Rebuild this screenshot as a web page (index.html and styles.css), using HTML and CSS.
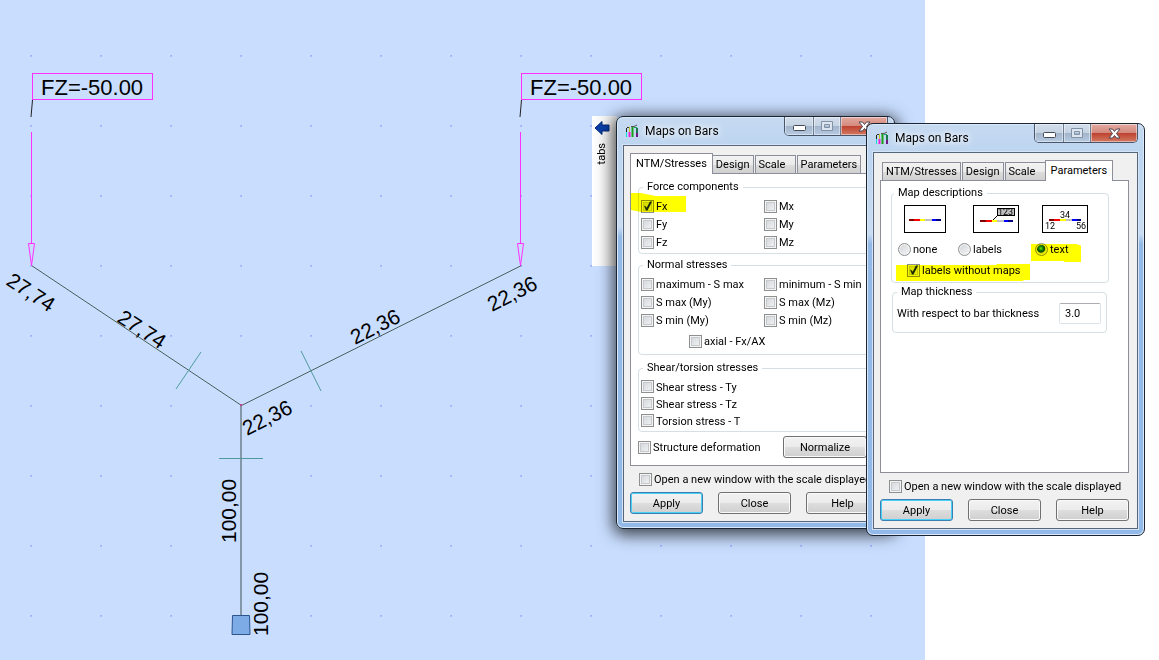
FILE: index.html
```
<!DOCTYPE html>
<html lang="en">
<head>
    <meta charset="UTF-8">
    <meta name="viewport" content="width=device-width, initial-scale=1.0">
    <title>Maps on Bars</title>
    <link rel="stylesheet" href="styles.css">
</head>
<body>
    <main class="workspace">
        <svg class="model" width="925" height="660">
            <defs>
                <pattern id="grid" x="30" y="55" width="70" height="70" patternUnits="userSpaceOnUse">
                    <rect x="0" y="0" width="2" height="2" fill="#b2bdff"/>
                    <rect x="1" y="0" width="1" height="1" fill="#9aa3fa"/>
                </pattern>
            </defs>
            <rect width="925" height="660" fill="url(#grid)"/>

            <!-- bars -->
            <g stroke="#4a605e" fill="none">
                <path d="M31.5 265.5L241.5 405.5L521.5 265.5"/>
                <path d="M241 405.5V615" stroke="#8397a8" stroke-width="2"/>
            </g>
            <g stroke="#4f999c" fill="none">
                <path d="M176 389L201 352M301 351L321 391"/>
                <path d="M219 458.5H263"/>
            </g>

            <!-- support -->
            <path d="M232.5 615.5H249.5L250 634.5H232Z" fill="#7cabe6" stroke="#2c5590"/>
            <circle cx="241" cy="405" r="1" fill="#d0208a"/>

            <!-- loads -->
            <g stroke="#ff30ff" fill="none">
                <rect x="32.5" y="73.5" width="120" height="26"/>
                <rect x="521.5" y="73.5" width="120" height="26"/>
                <path d="M31.5 132V243M28.5 243.5H34.5L31.5 265.5Z"/>
                <path d="M520.5 132V243M517.5 243.5H523.5L520.5 265.5Z"/>
            </g>
            <path d="M32.5 100L31 117M521.5 100L520 117" stroke="#222"/>

            <g class="values">
                <text class="load" x="41" y="95">FZ=-50.00</text>
                <text class="load" x="530" y="95">FZ=-50.00</text>
                <text transform="translate(5 284) rotate(33)">27,74</text>
                <text transform="translate(116 321) rotate(33)">27,74</text>
                <text transform="translate(355 345) rotate(-27)">22,36</text>
                <text transform="translate(247 436) rotate(-27)">22,36</text>
                <text transform="translate(492 312) rotate(-27)">22,36</text>
                <text transform="translate(236 543) rotate(-90)">100,00</text>
                <text transform="translate(268 636) rotate(-90)">100,00</text>
            </g>
        </svg>

        <button class="side-tabs">
            <svg width="16" height="14" viewBox="0 0 16 14">
                <path d="M1 7L8 0.5V4H15V10H8V13.5Z" fill="#0b3fa8" stroke="#062a78"/>
            </svg>
            <span>tabs</span>
        </button>

        <section class="window window-stress">
            <header class="titlebar">
                <svg class="logo" width="14" height="14" viewBox="0 0 14 14" fill="none">
                    <path d="M1.5 4V8" stroke="#222"/>
                    <path d="M1.5 8V13" stroke="#12e0d8"/>
                    <path d="M2 3.5H4" stroke="#333"/>
                    <path d="M4.5 3V8" stroke="#c8c020"/>
                    <path d="M4.5 8V13" stroke="#f01ee0" stroke-width="2"/>
                    <path d="M7.5 3V13" stroke="#16a016" stroke-width="2"/>
                    <path d="M6 2.5H9L12 1" stroke="#555"/>
                    <path d="M9 3.5H12" stroke="#18a060"/>
                    <path d="M12 4V9" stroke="#187848" stroke-width="2"/>
                    <path d="M12 9V13" stroke="#701880" stroke-width="2"/>
                </svg>
                <h1>Maps on Bars</h1>
                <div class="controls">
                    <button class="min" aria-label="Minimize"><svg width="13" height="6"><rect x="0.5" y="0.5" width="12" height="5" rx="1" fill="#fff" stroke="#444b57"/></svg></button>
                    <button class="max" aria-label="Maximize"><svg width="12" height="10"><path d="M0.5 0.5H11.5V9.5H0.5ZM3.5 3.5H8.5V6.5H3.5Z" fill="#dde6f0" fill-rule="evenodd" stroke="#8292a6"/></svg></button>
                    <button class="close" aria-label="Close"><svg width="13" height="11" viewBox="0 0 13 11"><path d="M1 1H4.5L6.5 3.5L8.5 1H12L8.5 5.5L12 10H8.5L6.5 7.5L4.5 10H1L4.5 5.5Z" fill="#fff" stroke="#4d4550"/></svg></button>
                </div>
            </header>
            <form class="client">
                <div class="tabs">
                    <button type="button" class="tab active">NTM/Stresses</button>
                    <button type="button" class="tab">Design</button>
                    <button type="button" class="tab">Scale</button>
                    <button type="button" class="tab">Parameters</button>
                </div>
                <div class="panel">
                    <fieldset class="group force">
                        <legend>Force components</legend>
                        <div class="pairs">
                            <label class="option mark-fx"><input type="checkbox" checked>Fx</label>
                            <label class="option"><input type="checkbox">Mx</label>
                            <label class="option"><input type="checkbox">Fy</label>
                            <label class="option"><input type="checkbox">My</label>
                            <label class="option"><input type="checkbox">Fz</label>
                            <label class="option"><input type="checkbox">Mz</label>
                        </div>
                    </fieldset>
                    <fieldset class="group normal">
                        <legend>Normal stresses</legend>
                        <div class="pairs">
                            <label class="option"><input type="checkbox">maximum - S max</label>
                            <label class="option"><input type="checkbox">minimum - S min</label>
                            <label class="option"><input type="checkbox">S max (My)</label>
                            <label class="option"><input type="checkbox">S max (Mz)</label>
                            <label class="option"><input type="checkbox">S min (My)</label>
                            <label class="option"><input type="checkbox">S min (Mz)</label>
                        </div>
                        <label class="option axial"><input type="checkbox">axial - Fx/AX</label>
                    </fieldset>
                    <fieldset class="group shear">
                        <legend>Shear/torsion stresses</legend>
                        <label class="option"><input type="checkbox">Shear stress - Ty</label>
                        <label class="option"><input type="checkbox">Shear stress - Tz</label>
                        <label class="option"><input type="checkbox">Torsion stress - T</label>
                    </fieldset>
                    <div class="deformation">
                        <label class="option"><input type="checkbox">Structure deformation</label>
                        <button type="button" class="button wide">Normalize</button>
                    </div>
                </div>
                <label class="option new-window"><input type="checkbox">Open a new window with the scale displayed</label>
                <div class="actions">
                    <button type="button" class="button default">Apply</button>
                    <button type="button" class="button">Close</button>
                    <button type="button" class="button">Help</button>
                </div>
            </form>
        </section>
    </main>

    <section class="window window-params">
        <header class="titlebar">
            <svg class="logo" width="14" height="14" viewBox="0 0 14 14" fill="none">
                <path d="M1.5 4V8" stroke="#222"/>
                <path d="M1.5 8V13" stroke="#12e0d8"/>
                <path d="M2 3.5H4" stroke="#333"/>
                <path d="M4.5 3V8" stroke="#c8c020"/>
                <path d="M4.5 8V13" stroke="#f01ee0" stroke-width="2"/>
                <path d="M7.5 3V13" stroke="#16a016" stroke-width="2"/>
                <path d="M6 2.5H9L12 1" stroke="#555"/>
                <path d="M9 3.5H12" stroke="#18a060"/>
                <path d="M12 4V9" stroke="#187848" stroke-width="2"/>
                <path d="M12 9V13" stroke="#701880" stroke-width="2"/>
            </svg>
            <h1>Maps on Bars</h1>
            <div class="controls">
                <button class="min" aria-label="Minimize"><svg width="13" height="6"><rect x="0.5" y="0.5" width="12" height="5" rx="1" fill="#fff" stroke="#444b57"/></svg></button>
                <button class="max" aria-label="Maximize"><svg width="12" height="10"><path d="M0.5 0.5H11.5V9.5H0.5ZM3.5 3.5H8.5V6.5H3.5Z" fill="#dde6f0" fill-rule="evenodd" stroke="#8292a6"/></svg></button>
                <button class="close" aria-label="Close"><svg width="13" height="11" viewBox="0 0 13 11"><path d="M1 1H4.5L6.5 3.5L8.5 1H12L8.5 5.5L12 10H8.5L6.5 7.5L4.5 10H1L4.5 5.5Z" fill="#fff" stroke="#4d4550"/></svg></button>
            </div>
        </header>
        <form class="client">
            <div class="tabs">
                <button type="button" class="tab">NTM/Stresses</button>
                <button type="button" class="tab">Design</button>
                <button type="button" class="tab">Scale</button>
                <button type="button" class="tab active">Parameters</button>
            </div>
            <div class="panel params">
                <fieldset class="group descriptions">
                    <legend>Map descriptions</legend>
                    <div class="samples">
                        <svg width="42" height="28">
                            <rect x="0.5" y="0.5" width="41" height="27" fill="#fff" stroke="#000"/>
                            <g transform="translate(5 14)">
                                <path d="M0 0h5v2h-5z" fill="#800000"/>
                                <path d="M5 0h6v2h-6z" fill="#f00"/>
                                <path d="M11 0h5v2h-5z" fill="#ff0"/>
                                <path d="M16 0h7v2h-7z" fill="#c0c0c0"/>
                                <path d="M23 0h4v2h-4z" fill="#00f"/>
                                <path d="M27 0h5v2h-5z" fill="#000080"/>
                            </g>
                        </svg>
                        <svg width="46" height="28">
                            <rect x="0.5" y="0.5" width="45" height="27" fill="#fff" stroke="#000"/>
                            <g transform="translate(7 15)">
                                <path d="M0 0h6v2h-6z" fill="#800000"/>
                                <path d="M6 0h6v2h-6z" fill="#f00"/>
                                <path d="M12 0h5v2h-5z" fill="#ff0"/>
                                <path d="M17 0h7v2h-7z" fill="#c0c0c0"/>
                                <path d="M24 0h4v2h-4z" fill="#00f"/>
                                <path d="M28 0h5v2h-5z" fill="#000080"/>
                            </g>
                            <path d="M20 15L25 10" stroke="#000"/>
                            <rect x="24.5" y="3.5" width="17" height="7" fill="#c0c0c0" stroke="#000"/>
                            <text class="tiny" x="25" y="10">123</text>
                        </svg>
                        <svg width="46" height="28">
                            <rect x="0.5" y="0.5" width="45" height="27" fill="#fff" stroke="#000"/>
                            <g transform="translate(7 14)">
                                <path d="M0 0h5v2h-5z" fill="#800000"/>
                                <path d="M5 0h6v2h-6z" fill="#f00"/>
                                <path d="M11 0h6v2h-6z" fill="#ff0"/>
                                <path d="M17 0h6v2h-6z" fill="#c0c0c0"/>
                                <path d="M23 0h5v2h-5z" fill="#00f"/>
                                <path d="M28 0h4v2h-4z" fill="#000080"/>
                            </g>
                            <text class="tiny" x="18" y="13">34</text>
                            <text class="tiny" x="3" y="24">12</text>
                            <text class="tiny" x="34" y="24">56</text>
                        </svg>
                    </div>
                    <div class="radios">
                        <label class="option"><input type="radio" name="description">none</label>
                        <label class="option"><input type="radio" name="description">labels</label>
                        <label class="option mark-text"><input type="radio" name="description" checked>text</label>
                    </div>
                    <label class="option mark-labels"><input type="checkbox" checked>labels without maps</label>
                </fieldset>
                <fieldset class="group thickness">
                    <legend>Map thickness</legend>
                    <div class="ratio">
                        <label for="ratio">With respect to bar thickness</label>
                        <input type="text" id="ratio" value="3.0">
                    </div>
                </fieldset>
            </div>
            <label class="option new-window"><input type="checkbox">Open a new window with the scale displayed</label>
            <div class="actions">
                <button type="button" class="button default">Apply</button>
                <button type="button" class="button">Close</button>
                <button type="button" class="button">Help</button>
            </div>
        </form>
    </section>
</body>
</html>
```
FILE: styles.css
```
* {
    box-sizing: border-box;
}
body {
    display: flex;
    min-height: 100vh;
    margin: 0;
    background: #fff;
    color: #000;
    font: 11px/14px Roboto, "Noto Sans", sans-serif;
}
button, input {
    margin: 0;
    font: inherit;
    color: inherit;
}

/* Model view */
.workspace {
    position: relative;
    flex: 1;
    margin-right: 234px;
    overflow: hidden;
    background: #c9deff;
}
.model {
    display: block;
}
.values {
    font-family: "Liberation Sans", Arial, sans-serif;
    font-size: 21px;
}
.load {
    font-size: 22px;
}
.side-tabs {
    position: absolute;
    z-index: 2;
    left: 592px;
    top: 116px;
    display: flex;
    flex-direction: column;
    align-items: center;
    gap: 8px;
    width: 25px;
    height: 150px;
    padding: 5px 5px 0 0;
    border: none;
    background: linear-gradient(90deg, #fff, #f0f0f0);
}
.side-tabs span {
    writing-mode: vertical-rl;
    transform: rotate(180deg);
}

/* Window frame */
.window {
    position: absolute;
    width: 279px;
    padding: 0 6px 6px;
    border: 1px solid #1b2432;
    border-radius: 7px;
    background: linear-gradient(#c6daf1 0, #bdd5f0 30px, #c9dcf1 110px, #93b9e6 120px, #93b9e8 100%);
    box-shadow: inset 0 0 0 1px #d9e9f9;
}
.window-stress {
    z-index: 3;
    left: 616px;
    top: 116px;
    box-shadow: inset 0 0 0 1px #d9e9f9, 0 3px 16px 3px rgba(0, 0, 0, 0.7);
}
.window-params {
    z-index: 4;
    left: 866px;
    top: 123px;
}
.titlebar {
    display: flex;
    height: 28px;
    padding-left: 2px;
}
.logo {
    margin: 7px 6px 0 0;
}
.titlebar h1 {
    flex: 1;
    margin: 7px 0 0;
    font-size: 12px;
    font-weight: 400;
    line-height: 14px;
    text-shadow: 0 0 6px #fff, 0 0 8px #fff;
}
.controls {
    display: flex;
    height: 19px;
    overflow: hidden;
    border: 1px solid #47566c;
    border-top: none;
    border-radius: 0 0 5px 5px;
}
.controls button {
    display: flex;
    justify-content: center;
    align-items: center;
    width: 28px;
    padding: 0;
    border: none;
    background: linear-gradient(#d3deeb, #c6d3e3 48%, #a3b5cb 52%, #b6cae2);
    box-shadow: inset 0 0 0 1px rgba(255, 255, 255, 0.45);
}
.controls .min {
    padding-top: 3px;
}
.controls .max {
    border-left: 1px solid #6d7d92;
    border-right: 1px solid #6d7d92;
}
.controls .close {
    width: 46px;
    background: linear-gradient(#e3aba1, #d58a7e 48%, #be4331 52%, #d27a62);
}
.client {
    padding: 7px 8px 7px 6px;
    border: 1px solid #56667c;
    background: #f0f0f0;
    box-shadow: 0 0 0 1px #d3e4f7;
}

/* Tabs */
.tabs {
    display: flex;
    align-items: flex-end;
    gap: 1px;
    height: 20px;
    padding-left: 2px;
}
.tab {
    min-width: 41px;
    height: 18px;
    padding: 0 3px;
    border: 1px solid #8c8e99;
    border-bottom: none;
    background: linear-gradient(#f3f3f3, #ebebeb 50%, #dddddd 51%, #d0d0d0);
    line-height: 17px;
    text-align: left;
    white-space: nowrap;
}
.tab.active {
    position: relative;
    height: 21px;
    margin: 0 -2px -1px;
    padding: 0 5px 1px;
    background: #fff;
}
.panel {
    min-height: 293px;
    padding: 6px 0 7px 7px;
    border: 1px solid #8c8e99;
    background: #fff;
}
.panel.params {
    padding: 5px 19px 7px 10px;
}

/* Groups and options */
.group {
    margin: 0;
    padding: 3px 0 2px 2px;
    border: 1px solid #d5dfe5;
    border-radius: 4px;
}
.group legend {
    margin-left: 2px;
    padding: 0 4px;
}
.pairs {
    display: grid;
    grid-template-columns: 123px 1fr;
}
.normal {
    margin-top: 4px;
    padding-bottom: 4px;
}
.axial {
    margin: 3px 0 0 48px;
}
.shear {
    margin-top: 6px;
}
.shear .option {
    height: 17px;
}
.option {
    position: relative;
    display: flex;
    align-items: center;
    gap: 2px;
    height: 18px;
    padding-top: 2px;
}
.option input {
    appearance: none;
    flex: none;
    width: 13px;
    height: 13px;
    margin-bottom: 2px;
    border: 1px solid #8e8f8f;
    background: linear-gradient(135deg, #cfd3d8, #f6f6f6);
    box-shadow: inset 0 0 0 1px #f4f4f4, inset 0 0 0 2px #c6cacf;
}
.option input[type="checkbox"]:checked::before {
    content: "";
    display: block;
    width: 11px;
    height: 11px;
    background: #1c2c4c;
    clip-path: polygon(18% 45%, 36% 55%, 42% 66%, 72% 10%, 92% 10%, 50% 92%, 36% 92%);
}
.option input[type="radio"] {
    border-radius: 50%;
    box-shadow: inset 0 0 0 1px #f4f4f4;
}
.option input[type="radio"]:checked {
    background: radial-gradient(circle at 45% 40%, #7fe07f 0, #149014 20%, #063c06 42%, #d8dcd8 52%);
}
.deformation {
    display: flex;
    justify-content: space-between;
    margin-top: 4px;
    padding-right: 11px;
}
.deformation .option {
    height: 22px;
}

/* Yellow marker strokes */
.mark-fx::after, .mark-text::after, .mark-labels::after {
    content: "";
    position: absolute;
    background: #ff0;
    mix-blend-mode: multiply;
    pointer-events: none;
}
.mark-fx::after {
    left: -10px;
    top: -4px;
    width: 55px;
    height: 19px;
    clip-path: polygon(0 0, 18% 0, 44% 16%, 100% 16%, 100% 100%, 18% 100%, 0 90%);
}
.mark-text::after {
    left: -4px;
    top: 4px;
    width: 50px;
    height: 18px;
    clip-path: polygon(0 0, 90% 0, 100% 8%, 100% 100%, 66% 100%, 66% 95%, 0 95%);
}
.mark-labels::after {
    left: -11px;
    top: 3px;
    width: 134px;
    height: 17px;
    clip-path: polygon(0 6%, 75% 6%, 75% 0, 100% 0, 100% 94%, 95% 94%, 95% 100%, 0 100%);
}

/* Parameters page */
.descriptions {
    padding: 5px 0 3px 6px;
}
.descriptions legend {
    margin-left: -4px;
}
.samples {
    display: flex;
    gap: 27px;
    padding-left: 6px;
}
.samples svg + svg + svg {
    margin-left: -4px;
}
.tiny {
    font: 9px Roboto, sans-serif;
}
.radios {
    display: flex;
    margin-top: 7px;
}
.radios .option {
    width: 60px;
}
.radios .option:nth-child(2) {
    width: 77px;
}
.mark-labels {
    width: 140px;
    margin: 3px 0 0 9px;
}
.thickness {
    margin: 2px 2px 0 1px;
    padding: 4px 5px 8px 4px;
}
.thickness legend {
    margin-left: 0;
}
.ratio {
    display: flex;
    justify-content: space-between;
    align-items: center;
}
.ratio input {
    width: 42px;
    height: 21px;
    padding: 0 5px;
    border: 1px solid #dde3ea;
    border-top-color: #abadb3;
    border-radius: 2px;
    background: #fff;
}

/* Bottom row */
.new-window {
    margin: 4px 0 4px 9px;
    white-space: nowrap;
}
.actions {
    display: flex;
    justify-content: space-between;
}
.button {
    width: 73px;
    height: 22px;
    padding: 1px 0 0;
    border: 1px solid #707070;
    border-radius: 3px;
    background: linear-gradient(#f2f2f2, #ebebeb 50%, #dddddd 51%, #cfcfcf);
    box-shadow: inset 0 0 0 1px #fafafa;
}
.button.default {
    border-color: #3c7fb1;
    box-shadow: inset 0 0 0 1px #48d0f6;
}
.button.wide {
    width: 84px;
}
```
